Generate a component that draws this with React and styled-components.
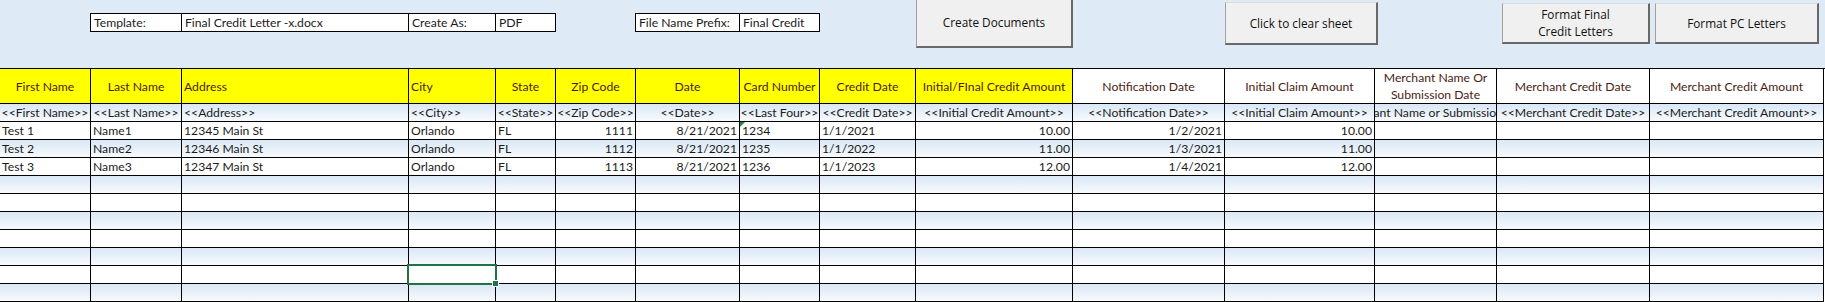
import React from 'react';
import styled, { createGlobalStyle } from 'styled-components';

// column widths follow the sheet grid (px)
const COLS = [91, 91, 227, 87, 60, 80, 104, 80, 96, 157, 152, 150, 122, 153, 174];
const gridCols = COLS.map(w => `${w}px`).join(' ');

const GlobalStyle = createGlobalStyle`
  html, body {
    margin: 0;
    padding: 0;
    background: #ffffff;
  }
  body {
    font-family: Lato, 'Liberation Sans', sans-serif;
  }
`;

const Sheet = styled.div`
  width: 1825px;
  height: 302px;
  overflow: hidden;
  background: #ffffff;
`;

const TopBand = styled.div`
  display: grid;
  grid-template-columns: ${gridCols};
  height: 68px;
  background: #deeaf6;
  align-items: start;
`;

const FieldCell = styled.div`
  box-sizing: border-box;
  grid-column: ${props => props.$col};
  height: 19px;
  margin-top: 13px;
  margin-left: -1px;
  border: 1px solid #000000;
  background: #ffffff;
  padding: 0 3px;
  font-size: 12.2px;
  line-height: 17px;
  color: #1b1b1b;
  white-space: nowrap;
  overflow: hidden;
`;

const SheetButton = styled.button`
  box-sizing: border-box;
  grid-column: ${props => props.$col};
  width: ${props => props.$width}px;
  height: ${props => props.$height}px;
  margin-top: ${props => props.$top}px;
  margin-left: ${props => props.$left || 0}px;
  background: #f0f0f0;
  border-top: 1px solid #dcdcdc;
  border-left: 1px solid #a0a0a0;
  border-right: 2px solid #696969;
  border-bottom: 2px solid #696969;
  border-radius: 0;
  padding: 0 6px;
  font-family: 'Open Sans', 'Liberation Sans', sans-serif;
  font-size: 11.8px;
  line-height: 17px;
  color: #111111;
  text-align: center;
  cursor: pointer;
`;

const Grid = styled.div`
  display: grid;
  grid-template-columns: ${gridCols};
  grid-template-rows: 35px;
  grid-auto-rows: 18px;
  border-top: 1px solid #000000;
`;

const justify = { left: 'flex-start', center: 'center', right: 'flex-end' };

const Cell = styled.div`
  position: relative;
  box-sizing: border-box;
  display: flex;
  align-items: center;
  justify-content: ${props => justify[props.$align || 'left']};
  border-right: 1px solid #000000;
  border-bottom: 1px solid #000000;
  padding: 0 2px;
  font-size: 12.2px;
  color: #1b1b1b;
  white-space: nowrap;
  overflow: ${props => (props.$selected ? 'visible' : 'hidden')};
  z-index: ${props => (props.$selected ? 2 : 'auto')};
  background: ${props =>
    props.$band ? 'linear-gradient(#d9e7f5, #f7fafd)' : '#ffffff'};
`;

const HeadCell = styled(Cell)`
  background: ${props => (props.$yellow ? '#ffff00' : '#ffffff')};
  color: #4a1d12;
  white-space: ${props => (props.$wrap ? 'normal' : 'nowrap')};
  text-align: center;
  line-height: 17px;
`;

const Selection = styled.span`
  position: absolute;
  left: -2px;
  top: -2px;
  right: -2px;
  bottom: -2px;
  border: 2px solid #217346;
  pointer-events: none;

  &::after {
    content: '';
    position: absolute;
    right: -4px;
    bottom: -4px;
    width: 5px;
    height: 5px;
    background: #217346;
    border: 1px solid #ffffff;
  }
`;

const ErrorFlag = styled.span`
  position: absolute;
  top: 0;
  left: 0;
  width: 0;
  height: 0;
  border-top: 5px solid #228b3a;
  border-right: 5px solid transparent;
`;

const columns = [
  { title: 'First Name', tag: '<<First Name>>', yellow: true, head: 'center', tag_: 'center', data: 'left' },
  { title: 'Last Name', tag: '<<Last Name>>', yellow: true, head: 'center', tag_: 'center', data: 'left' },
  { title: 'Address', tag: '<<Address>>', yellow: true, head: 'left', tag_: 'left', data: 'left' },
  { title: 'City', tag: '<<City>>', yellow: true, head: 'left', tag_: 'left', data: 'left' },
  { title: 'State', tag: '<<State>>', yellow: true, head: 'center', tag_: 'center', data: 'left' },
  { title: 'Zip Code', tag: '<<Zip Code>>', yellow: true, head: 'center', tag_: 'center', data: 'right' },
  { title: 'Date', tag: '<<Date>>', yellow: true, head: 'center', tag_: 'center', data: 'right' },
  { title: 'Card Number', tag: '<<Last Four>>', yellow: true, head: 'center', tag_: 'center', data: 'left' },
  { title: 'Credit Date', tag: '<<Credit Date>>', yellow: true, head: 'center', tag_: 'center', data: 'left' },
  { title: 'Initial/FInal Credit Amount', tag: '<<Initial Credit Amount>>', yellow: true, head: 'center', tag_: 'center', data: 'right' },
  { title: 'Notification Date', tag: '<<Notification Date>>', head: 'center', tag_: 'center', data: 'right' },
  { title: 'Initial Claim Amount', tag: '<<Initial Claim Amount>>', head: 'center', tag_: 'center', data: 'right' },
  { title: 'Merchant Name Or Submission Date', tag: '<<Merchant Name or Submission Date>>', head: 'center', tag_: 'center', data: 'left', wrap: true },
  { title: 'Merchant Credit Date', tag: '<<Merchant Credit Date>>', head: 'center', tag_: 'center', data: 'left' },
  { title: 'Merchant Credit Amount', tag: '<<Merchant Credit Amount>>', head: 'center', tag_: 'center', data: 'left' },
];

const records = [
  ['Test 1', 'Name1', '12345 Main St', 'Orlando', 'FL', '1111', '8/21/2021', '1234', '1/1/2021', '10.00', '1/2/2021', '10.00', '', '', ''],
  ['Test 2', 'Name2', '12346 Main St', 'Orlando', 'FL', '1112', '8/21/2021', '1235', '1/1/2022', '11.00', '1/3/2021', '11.00', '', '', ''],
  ['Test 3', 'Name3', '12347 Main St', 'Orlando', 'FL', '1113', '8/21/2021', '1236', '1/1/2023', '12.00', '1/4/2021', '12.00', '', '', ''],
];

const EMPTY_ROWS = 7;

const App = () => {
  const rows = [
    ...records,
    ...Array.from({ length: EMPTY_ROWS }, () => columns.map(() => '')),
  ];

  return (
    <Sheet>
      <GlobalStyle />
      <TopBand>
        <FieldCell $col={2}>Template:</FieldCell>
        <FieldCell $col={3}>Final Credit Letter -x.docx</FieldCell>
        <FieldCell $col={4}>Create As:</FieldCell>
        <FieldCell $col={5}>PDF</FieldCell>
        <FieldCell $col={7}>File Name Prefix:</FieldCell>
        <FieldCell $col={8}>Final Credit</FieldCell>
        <SheetButton $col={10} $width={157} $height={51} $top={-3}>
          Create Documents
        </SheetButton>
        <SheetButton $col={12} $width={153} $height={43} $top={2}>
          Click to clear sheet
        </SheetButton>
        <SheetButton $col={14} $width={148} $height={41} $top={3} $left={5}>
          Format Final
          <br />
          Credit Letters
        </SheetButton>
        <SheetButton $col={15} $width={164} $height={41} $top={3} $left={5}>
          Format PC Letters
        </SheetButton>
      </TopBand>

      <Grid>
        {columns.map(col => (
          <HeadCell key={col.title} $yellow={col.yellow} $align={col.head} $wrap={col.wrap}>
            {col.title}
          </HeadCell>
        ))}

        {columns.map(col => (
          <Cell key={col.tag} $band $align={col.tag_}>
            {col.tag}
          </Cell>
        ))}

        {rows.map((row, r) =>
          row.map((value, c) => (
            <Cell
              key={`${r}-${c}`}
              $band={r % 2 === 1}
              $align={columns[c].data}
              $selected={r === 8 && c === 3}
            >
              {r === 0 && c === 7 && <ErrorFlag />}
              {value}
              {r === 8 && c === 3 && <Selection />}
            </Cell>
          ))
        )}
      </Grid>
    </Sheet>
  );
};

export default App;
